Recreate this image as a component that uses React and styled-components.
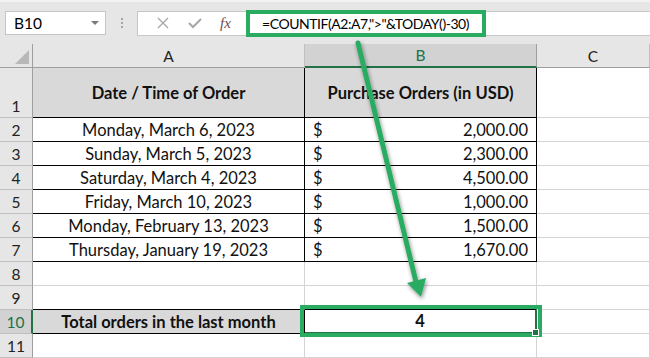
import React from "react";
import styled, { createGlobalStyle } from "styled-components";

const GREEN = "#2aab62";
const XL_GREEN = "#217346";
const GRID = "#d4d4d4";

const GlobalStyle = createGlobalStyle`
  html, body {
    margin: 0;
    padding: 0;
    background: #ffffff;
  }
  body {
    font-family: Lato, "Liberation Sans", sans-serif;
    color: #000;
  }
`;

const Page = styled.div`
  position: relative;
  width: 650px;
  height: 358px;
  overflow: hidden;
  background: #fff;
`;

const TopBar = styled.div`
  height: 44px;
  box-sizing: border-box;
  background: #e6e6e6;
  border-top: 2px solid #f2f2f2;
  display: flex;
  align-items: center;
  padding-left: 5px;
`;

const NameBox = styled.div`
  width: 101px;
  height: 24px;
  box-sizing: border-box;
  background: #fff;
  border: 1px solid #c6c6c6;
  display: flex;
  align-items: center;
  justify-content: space-between;
  padding: 0 6px 0 8px;
  font-size: 15.5px;
`;

const Caret = styled.span`
  width: 0;
  height: 0;
  border-left: 4px solid transparent;
  border-right: 4px solid transparent;
  border-top: 4px solid #7a7a7a;
`;

const Dots = styled.div`
  width: 31px;
  display: flex;
  flex-direction: column;
  align-items: center;
  gap: 2px;
  span {
    width: 2px;
    height: 2px;
    background: #a6a6a6;
  }
`;

const FxBox = styled.div`
  width: 109px;
  height: 25px;
  box-sizing: border-box;
  background: #fff;
  border: 1px solid #c6c6c6;
  border-right: none;
  display: flex;
  align-items: center;
  justify-content: space-around;
  padding: 0 6px 0 10px;
  color: #a0a0a0;
`;

const Fx = styled.span`
  font-family: "Liberation Serif", serif;
  font-style: italic;
  font-size: 15px;
  color: #6d4c4c;
`;

const FormulaWrap = styled.div`
  flex: 1;
  height: 25px;
  background: #fff;
  border-top: 1px solid #c6c6c6;
  border-bottom: 1px solid #c6c6c6;
  box-sizing: border-box;
  display: flex;
  align-items: center;
`;

const FormulaHighlight = styled.div`
  width: 240px;
  height: 27px;
  box-sizing: border-box;
  border: 4px solid ${GREEN};
  display: flex;
  align-items: center;
  padding-left: 12px;
  font-size: 14px;
  letter-spacing: -0.45px;
  white-space: nowrap;
`;

const Sheet = styled.div`
  display: grid;
  grid-template-columns: 33px 272px 232px 113px;
  grid-template-rows: 24px 50px repeat(10, 24px);
  font-size: 16.5px;
`;

const ColHead = styled.div`
  box-sizing: border-box;
  background: ${(p) => (p.$active ? "#d2d2d2" : "#e6e6e6")};
  color: ${(p) => (p.$active ? XL_GREEN : "#222")};
  border-right: 1px solid ${(p) => (p.$active ? "#9f9f9f" : "#c0c0c0")};
  border-bottom: ${(p) => (p.$active ? `2px solid ${XL_GREEN}` : "1px solid #9f9f9f")};
  display: flex;
  align-items: center;
  justify-content: center;
  font-size: 15.5px;
`;

const Corner = styled.div`
  box-sizing: border-box;
  background: #e6e6e6;
  border-right: 1px solid #9f9f9f;
  border-bottom: 1px solid #9f9f9f;
  display: flex;
  align-items: flex-end;
  justify-content: flex-end;
  padding: 0 3px 3px 0;
`;

const Triangle = styled.div`
  width: 0;
  height: 0;
  border-left: 14px solid transparent;
  border-bottom: 14px solid #b8b8b8;
`;

const RowHead = styled.div`
  box-sizing: border-box;
  background: ${(p) => (p.$active ? "#d2d2d2" : "#e6e6e6")};
  color: ${(p) => (p.$active ? XL_GREEN : "#222")};
  border-right: ${(p) => (p.$active ? `2px solid ${XL_GREEN}` : "1px solid #9f9f9f")};
  border-bottom: 1px solid #c0c0c0;
  display: flex;
  align-items: ${(p) => (p.$tall ? "flex-end" : "center")};
  justify-content: center;
  padding-bottom: ${(p) => (p.$tall ? "2px" : "0")};
  font-size: 15.5px;
`;

const Cell = styled.div`
  position: relative;
  box-sizing: border-box;
  background: ${(p) => p.$fill || "#fff"};
  border-right: 1px solid ${(p) => (p.$boxed ? "#000" : GRID)};
  border-bottom: 1px solid ${(p) => (p.$boxed || p.$edge ? "#000" : GRID)};
  display: flex;
  align-items: center;
  justify-content: ${(p) => p.$justify || "center"};
  padding: 0 8px;
  font-weight: ${(p) => (p.$bold ? 700 : 400)};
  white-space: nowrap;
  color: #111;
`;

const Dollar = styled.span`
  flex: 1;
`;

const Selected = styled(Cell)`
  z-index: 2;
  border-right: 2px solid ${XL_GREEN};
  border-bottom: 2px solid ${XL_GREEN};
  &::after {
    content: "";
    position: absolute;
    top: -5px;
    left: -5px;
    right: -7px;
    bottom: -5px;
    border: 4px solid ${GREEN};
    pointer-events: none;
  }
`;

const Handle = styled.span`
  position: absolute;
  right: -4px;
  bottom: -4px;
  width: 5px;
  height: 5px;
  background: ${XL_GREEN};
  border: 1px solid #fff;
  z-index: 1;
`;

const Arrow = styled.svg`
  position: absolute;
  left: 0;
  top: 0;
  pointer-events: none;
  z-index: 3;
`;

const orders = [
  ["Monday, March 6, 2023", "2,000.00"],
  ["Sunday, March 5, 2023", "2,300.00"],
  ["Saturday, March 4, 2023", "4,500.00"],
  ["Friday, March 10, 2023", "1,000.00"],
  ["Monday, February 13, 2023", "1,500.00"],
  ["Thursday, January 19, 2023", "1,670.00"],
];

export default function App() {
  return (
    <Page>
      <GlobalStyle />
      <TopBar>
        <NameBox>
          B10
          <Caret />
        </NameBox>
        <Dots>
          <span />
          <span />
          <span />
        </Dots>
        <FxBox>
          <svg width="12" height="12" viewBox="0 0 12 12">
            <path d="M1 1 L11 11 M11 1 L1 11" stroke="#a6a6a6" strokeWidth="1.3" />
          </svg>
          <svg width="14" height="12" viewBox="0 0 14 12">
            <path d="M1 6 L5 10 L13 2" fill="none" stroke="#a6a6a6" strokeWidth="2" />
          </svg>
          <Fx>fx</Fx>
        </FxBox>
        <FormulaWrap>
          <FormulaHighlight>=COUNTIF(A2:A7,"&gt;"&amp;TODAY()-30)</FormulaHighlight>
        </FormulaWrap>
      </TopBar>

      <Sheet>
        <Corner>
          <Triangle />
        </Corner>
        <ColHead>A</ColHead>
        <ColHead $active>B</ColHead>
        <ColHead>C</ColHead>

        <RowHead $tall>1</RowHead>
        <Cell $boxed $fill="#d9d9d9" $bold>
          Date / Time of Order
        </Cell>
        <Cell $boxed $fill="#d9d9d9" $bold>
          Purchase Orders (in USD)
        </Cell>
        <Cell />

        {orders.map(([date, amount], i) => (
          <React.Fragment key={date}>
            <RowHead>{i + 2}</RowHead>
            <Cell $boxed>{date}</Cell>
            <Cell $boxed $justify="space-between">
              <Dollar>$</Dollar>
              {amount}
            </Cell>
            <Cell />
          </React.Fragment>
        ))}

        <RowHead>8</RowHead>
        <Cell />
        <Cell />
        <Cell />

        <RowHead>9</RowHead>
        <Cell $edge />
        <Cell $edge />
        <Cell />

        <RowHead $active>10</RowHead>
        <Cell $boxed $fill="#d9d9d9" $bold>
          Total orders in the last month
        </Cell>
        <Selected $bold>
          4
          <Handle />
        </Selected>
        <Cell />

        <RowHead>11</RowHead>
        <Cell />
        <Cell />
        <Cell />
      </Sheet>

      <Arrow width="650" height="358" viewBox="0 0 650 358">
        <defs>
          <filter id="shadow" x="-50%" y="-10%" width="200%" height="120%">
            <feGaussianBlur in="SourceAlpha" stdDeviation="2" />
            <feOffset dx="1" dy="2" result="blur" />
            <feComponentTransfer>
              <feFuncA type="linear" slope="0.45" />
            </feComponentTransfer>
            <feMerge>
              <feMergeNode />
              <feMergeNode in="SourceGraphic" />
            </feMerge>
          </filter>
        </defs>
        <g filter="url(#shadow)">
          <line x1="358" y1="43" x2="416" y2="282" stroke={GREEN} strokeWidth="5" strokeLinecap="round" />
          <polygon points="407,283 426,278 421,297" fill={GREEN} />
        </g>
      </Arrow>
    </Page>
  );
}
